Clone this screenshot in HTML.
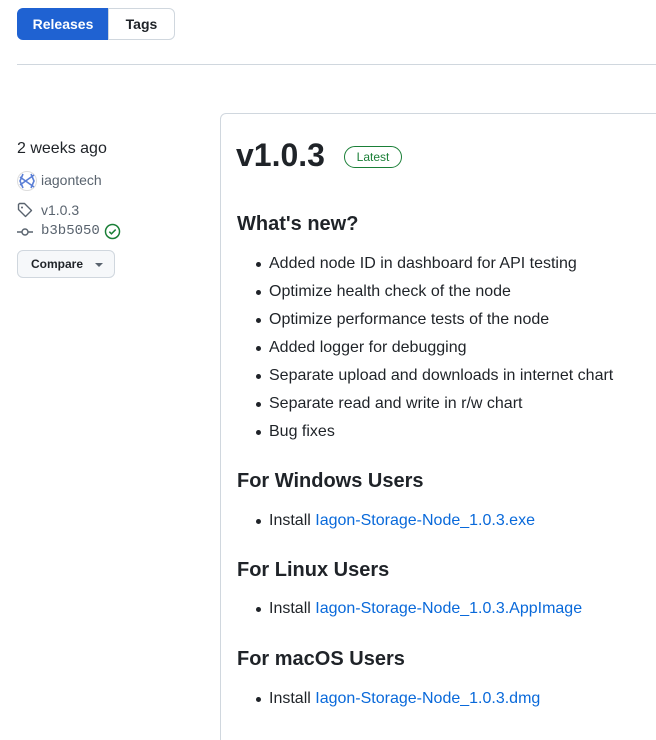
<!DOCTYPE html>
<html style="overflow:hidden;height:740px"><head><style>
body{margin:0;width:656px;height:740px;overflow:hidden;background:#fff;font-family:"Liberation Sans",Arial,sans-serif;color:#1f2328;position:relative}
.a{position:absolute;white-space:nowrap}
.btn{position:absolute;top:8px;height:32px;box-sizing:border-box;font-size:14px;font-weight:600;line-height:30px;text-align:center}
ul{margin:0;padding:0;list-style:none}
li{position:absolute;left:269px;font-size:16px;white-space:nowrap;line-height:18px}
li:before{content:"";position:absolute;left:-13px;top:7px;width:5px;height:5px;border-radius:50%;background:#1f2328}
a{color:#0969da;text-decoration:none}
h3{position:absolute;left:237px;margin:0;font-size:20px;font-weight:600;white-space:nowrap}
</style></head><body>
<div class="btn" style="left:17px;width:92px;background:#1f62d2;color:#fff;border-radius:6px 0 0 6px;border:1px solid #1f62d2">Releases</div>
<div class="btn" style="left:108px;width:67px;border:1px solid #d0d7de;border-radius:0 6px 6px 0">Tags</div>
<div class="a" style="left:17px;top:64px;width:639px;height:1px;background:#d0d7de"></div>

<div class="a" style="left:17px;top:140px;font-size:16px">2 weeks ago</div>
<svg class="a" style="left:17px;top:171px" width="20" height="20" viewBox="0 0 20 20"><circle cx="10" cy="10" r="9.5" fill="#fff" stroke="#ddd"/><path d="M3 6l14 10M3 14L17 4M6 3l-3 7 3 7M14 3l3 7-3 7" stroke="#5b7fd6" stroke-width="1.6" fill="none"/></svg>
<div class="a" style="left:41px;top:172px;font-size:14px;color:#59636e">iagontech</div>
<svg class="a" style="left:17px;top:202px" width="16" height="16" viewBox="0 0 16 16"><path d="M1.5 2.5v5l7 7 6-6-7-7h-5z" fill="none" stroke="#59636e" stroke-width="1.4" stroke-linejoin="round"/><circle cx="5" cy="5.5" r="1" fill="#59636e"/></svg>
<div class="a" style="left:41px;top:202px;font-size:14px;color:#59636e">v1.0.3</div>
<svg class="a" style="left:17px;top:224px" width="16" height="16" viewBox="0 0 16 16"><circle cx="8" cy="8" r="3" fill="none" stroke="#59636e" stroke-width="1.4"/><path d="M0 8h5M11 8h5" stroke="#59636e" stroke-width="1.4"/></svg>
<div class="a" style="left:41px;top:223px;font-size:14px;color:#59636e;font-family:'Liberation Mono',monospace">b3b5050</div>
<svg class="a" style="left:104px;top:223px" width="17" height="17" viewBox="0 0 16 16"><circle cx="8" cy="8" r="6.6" fill="none" stroke="#1a7f37" stroke-width="1.4"/><path d="M5 8.2l2 2 4-4" fill="none" stroke="#1a7f37" stroke-width="1.4"/></svg>
<div class="a" style="left:17px;top:250px;width:98px;height:28px;box-sizing:border-box;border:1px solid #d0d7de;border-radius:6px;background:#f6f8fa;font-size:12px;font-weight:600;line-height:26px;padding-left:13px">Compare<span style="position:absolute;left:77px;top:12px;border:4px solid transparent;border-top-color:#59636e;border-bottom:0"></span></div>

<div class="a" style="left:220px;top:113px;width:450px;height:640px;border:1px solid #d0d7de;border-radius:6px;box-sizing:border-box"></div>
<div class="a" style="left:236px;top:137px;font-size:32px;font-weight:700">v1.0.3</div>
<div class="a" style="left:344px;top:146px;width:58px;height:22px;box-sizing:border-box;border:1px solid #1a7f37;border-radius:11px;color:#1a7f37;font-size:12px;text-align:center;line-height:20px">Latest</div>
<h3 style="top:213px">What's new?</h3>
<ul>
<li style="top:255px">Added node ID in dashboard for API testing</li>
<li style="top:283px">Optimize health check of the node</li>
<li style="top:311px">Optimize performance tests of the node</li>
<li style="top:339px">Added logger for debugging</li>
<li style="top:367px">Separate upload and downloads in internet chart</li>
<li style="top:395px">Separate read and write in r/w chart</li>
<li style="top:423px">Bug fixes</li>
</ul>
<h3 style="top:470px">For Windows Users</h3>
<ul><li style="top:512px">Install <a>Iagon-Storage-Node_1.0.3.exe</a></li></ul>
<h3 style="top:559px">For Linux Users</h3>
<ul><li style="top:600px">Install <a>Iagon-Storage-Node_1.0.3.AppImage</a></li></ul>
<h3 style="top:648px">For macOS Users</h3>
<ul><li style="top:690px">Install <a>Iagon-Storage-Node_1.0.3.dmg</a></li></ul>
</body></html>
